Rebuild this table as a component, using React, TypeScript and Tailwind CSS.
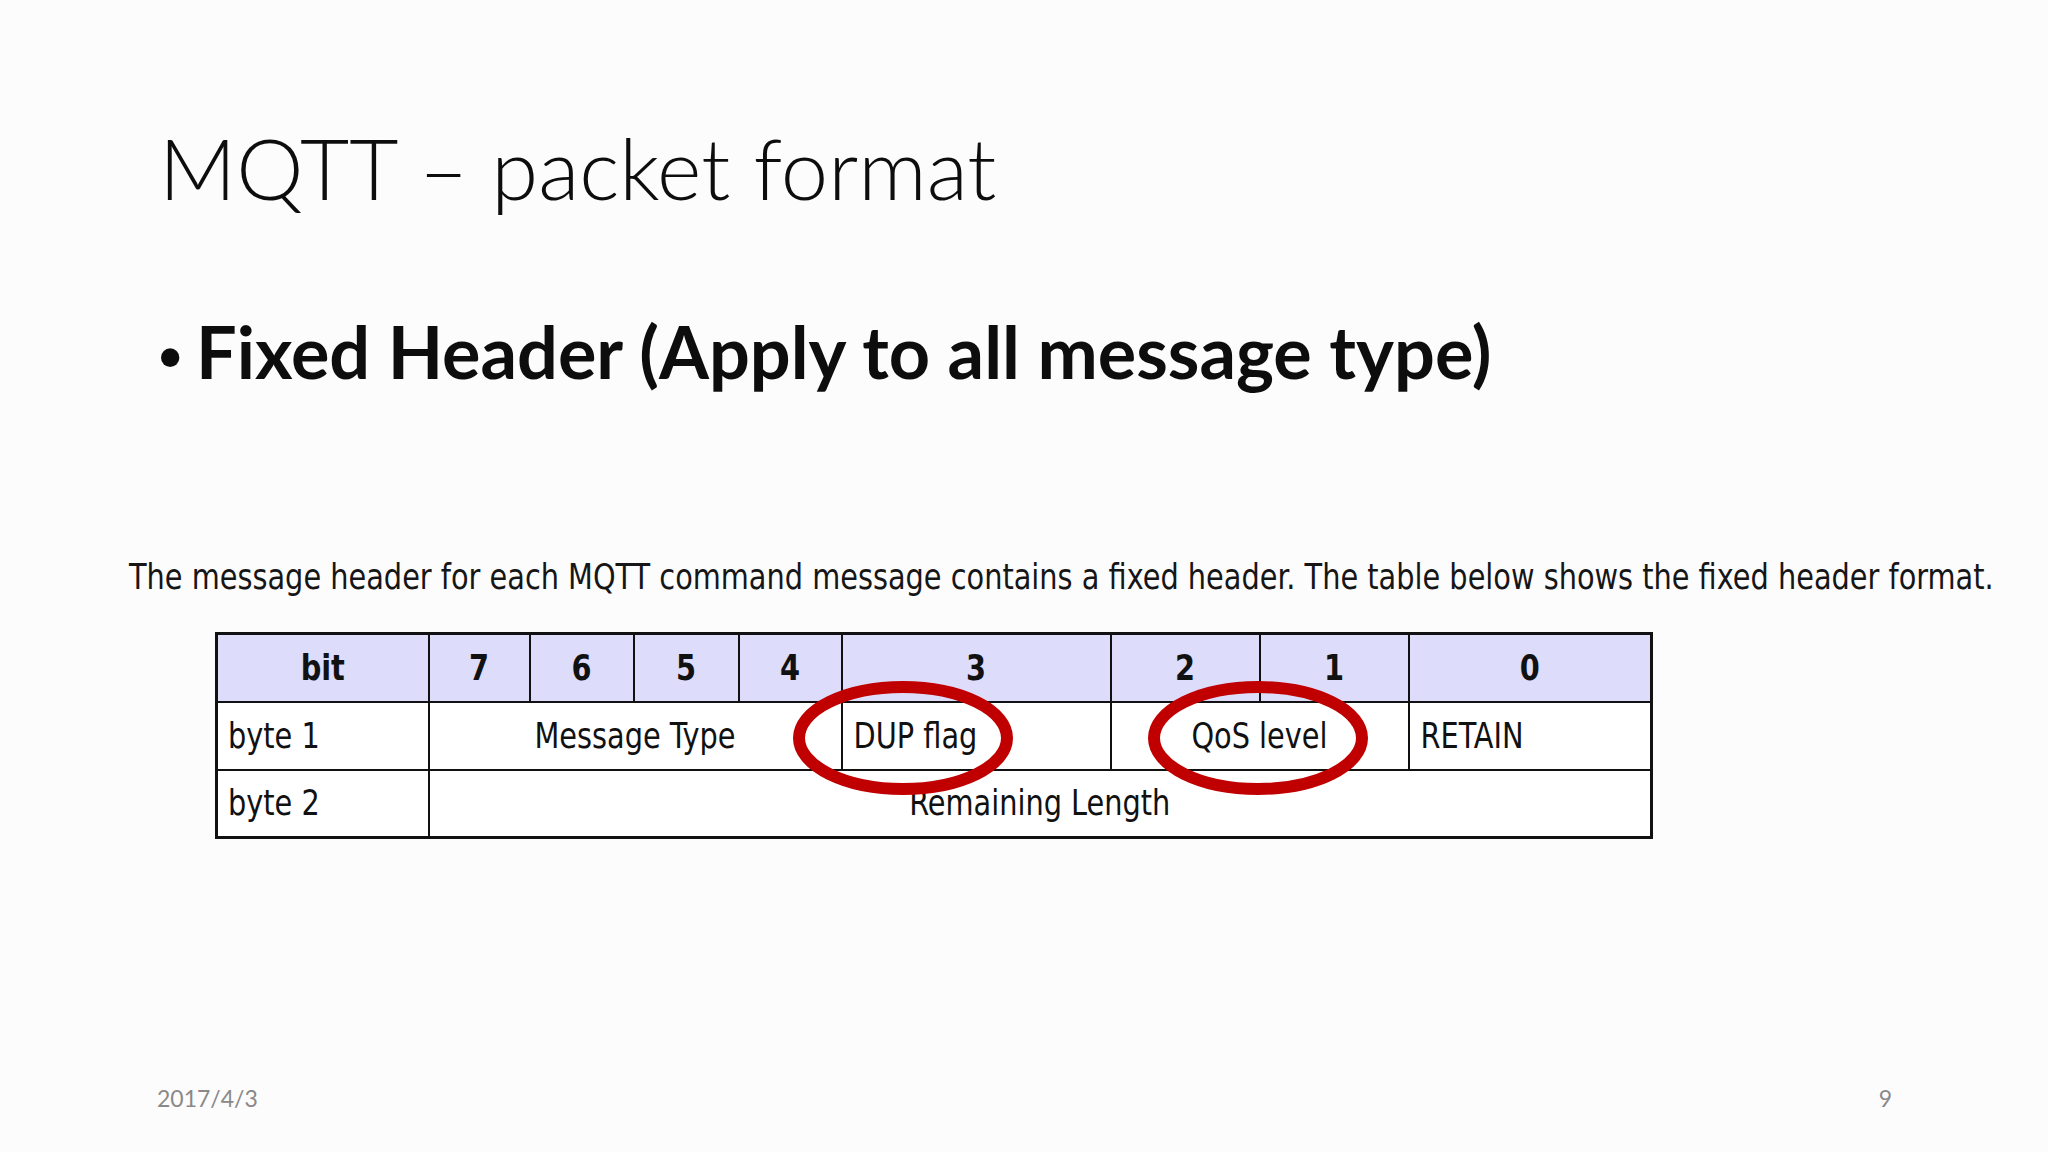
import React from 'react';

const NARROW = "font-['DejaVu_Sans_Condensed','DejaVu_Sans',sans-serif] font-stretch-condensed";

const bits = ['7', '6', '5', '4', '3', '2', '1', '0'];

// screenshot text in the slide is squeezed horizontally; stretch it back up a little
const Tall: React.FC<{ children: React.ReactNode }> = ({ children }) => (
  <span className="inline-block scale-y-[1.12]">{children}</span>
);

const Ring: React.FC<{ cx: number }> = ({ cx }) => (
  <ellipse cx={cx} cy={106} rx={104} ry={51} fill="none" stroke="#c00000" strokeWidth={12} />
);

const HeaderTable: React.FC = () => {
  return (
    <div className="relative ml-[215px] w-[1435px]">
      <table className={`w-[1435px] table-fixed border-collapse border-[3px] border-[#111] text-[32px] leading-none text-[#111] ${NARROW}`}>
        <colgroup>
          <col className="w-[212px]" />
          <col className="w-[101px]" />
          <col className="w-[104px]" />
          <col className="w-[105px]" />
          <col className="w-[103px]" />
          <col className="w-[269px]" />
          <col className="w-[149px]" />
          <col className="w-[149px]" />
          <col className="w-[243px]" />
        </colgroup>
        <tbody>
          <tr className="h-[68px] bg-[#dddcfb]">
            <th className="border-2 border-[#111] text-center font-bold">
              <Tall>bit</Tall>
            </th>
            {bits.map((b) => (
              <th key={b} className="border-2 border-[#111] text-center font-bold">
                <Tall>{b}</Tall>
              </th>
            ))}
          </tr>
          <tr className="h-[68px] bg-white">
            <td className="border-2 border-[#111] pl-[10px]"><Tall>byte 1</Tall></td>
            <td colSpan={4} className="border-2 border-[#111] text-center"><Tall>Message Type</Tall></td>
            <td className="border-2 border-[#111] pl-[11px]"><Tall>DUP flag</Tall></td>
            <td colSpan={2} className="border-2 border-[#111] text-center"><Tall>QoS level</Tall></td>
            <td className="border-2 border-[#111] pl-[11px]"><Tall>RETAIN</Tall></td>
          </tr>
          <tr className="h-[68px] bg-white">
            <td className="border-2 border-[#111] pl-[10px]"><Tall>byte 2</Tall></td>
            <td colSpan={8} className="border-2 border-[#111] text-center"><Tall>Remaining Length</Tall></td>
          </tr>
        </tbody>
      </table>
      <svg className="pointer-events-none absolute left-0 top-0" width="1435" height="210" viewBox="0 0 1435 210">
        <Ring cx={688} />
        <Ring cx={1043} />
      </svg>
    </div>
  );
};

const App: React.FC = () => {
  return (
    <div className="flex h-[1152px] w-[2048px] flex-col bg-[#fdfcfd] text-[#0d0d0d]">
      <h1 className="ml-[159px] mt-[125px] font-['Lato',sans-serif] text-[85px] font-light leading-none">
        MQTT – packet format
      </h1>

      <div className="ml-[159px] mt-[105px] flex items-baseline font-['Lato',sans-serif] text-[72px] font-bold leading-none">
        <span className="w-[37px] font-['Liberation_Sans',sans-serif] text-[64px]">•</span>
        <span>Fixed Header (Apply to all message type)</span>
      </div>

      <p className={`ml-[129px] mt-[170px] origin-top-left scale-y-[1.12] whitespace-nowrap text-[32px] leading-none text-[#161616] ${NARROW}`}>
        The message header for each MQTT command message contains a fixed header. The table below shows the fixed header format.
      </p>

      <div className="mt-[41px]">
        <HeaderTable />
      </div>

      <div className="mt-auto flex justify-between pb-[42px] pl-[157px] pr-[156px] font-['Lato',sans-serif] text-[23px] leading-none text-[#898989]">
        <span>2017/4/3</span>
        <span>9</span>
      </div>
    </div>
  );
};

export default App;
